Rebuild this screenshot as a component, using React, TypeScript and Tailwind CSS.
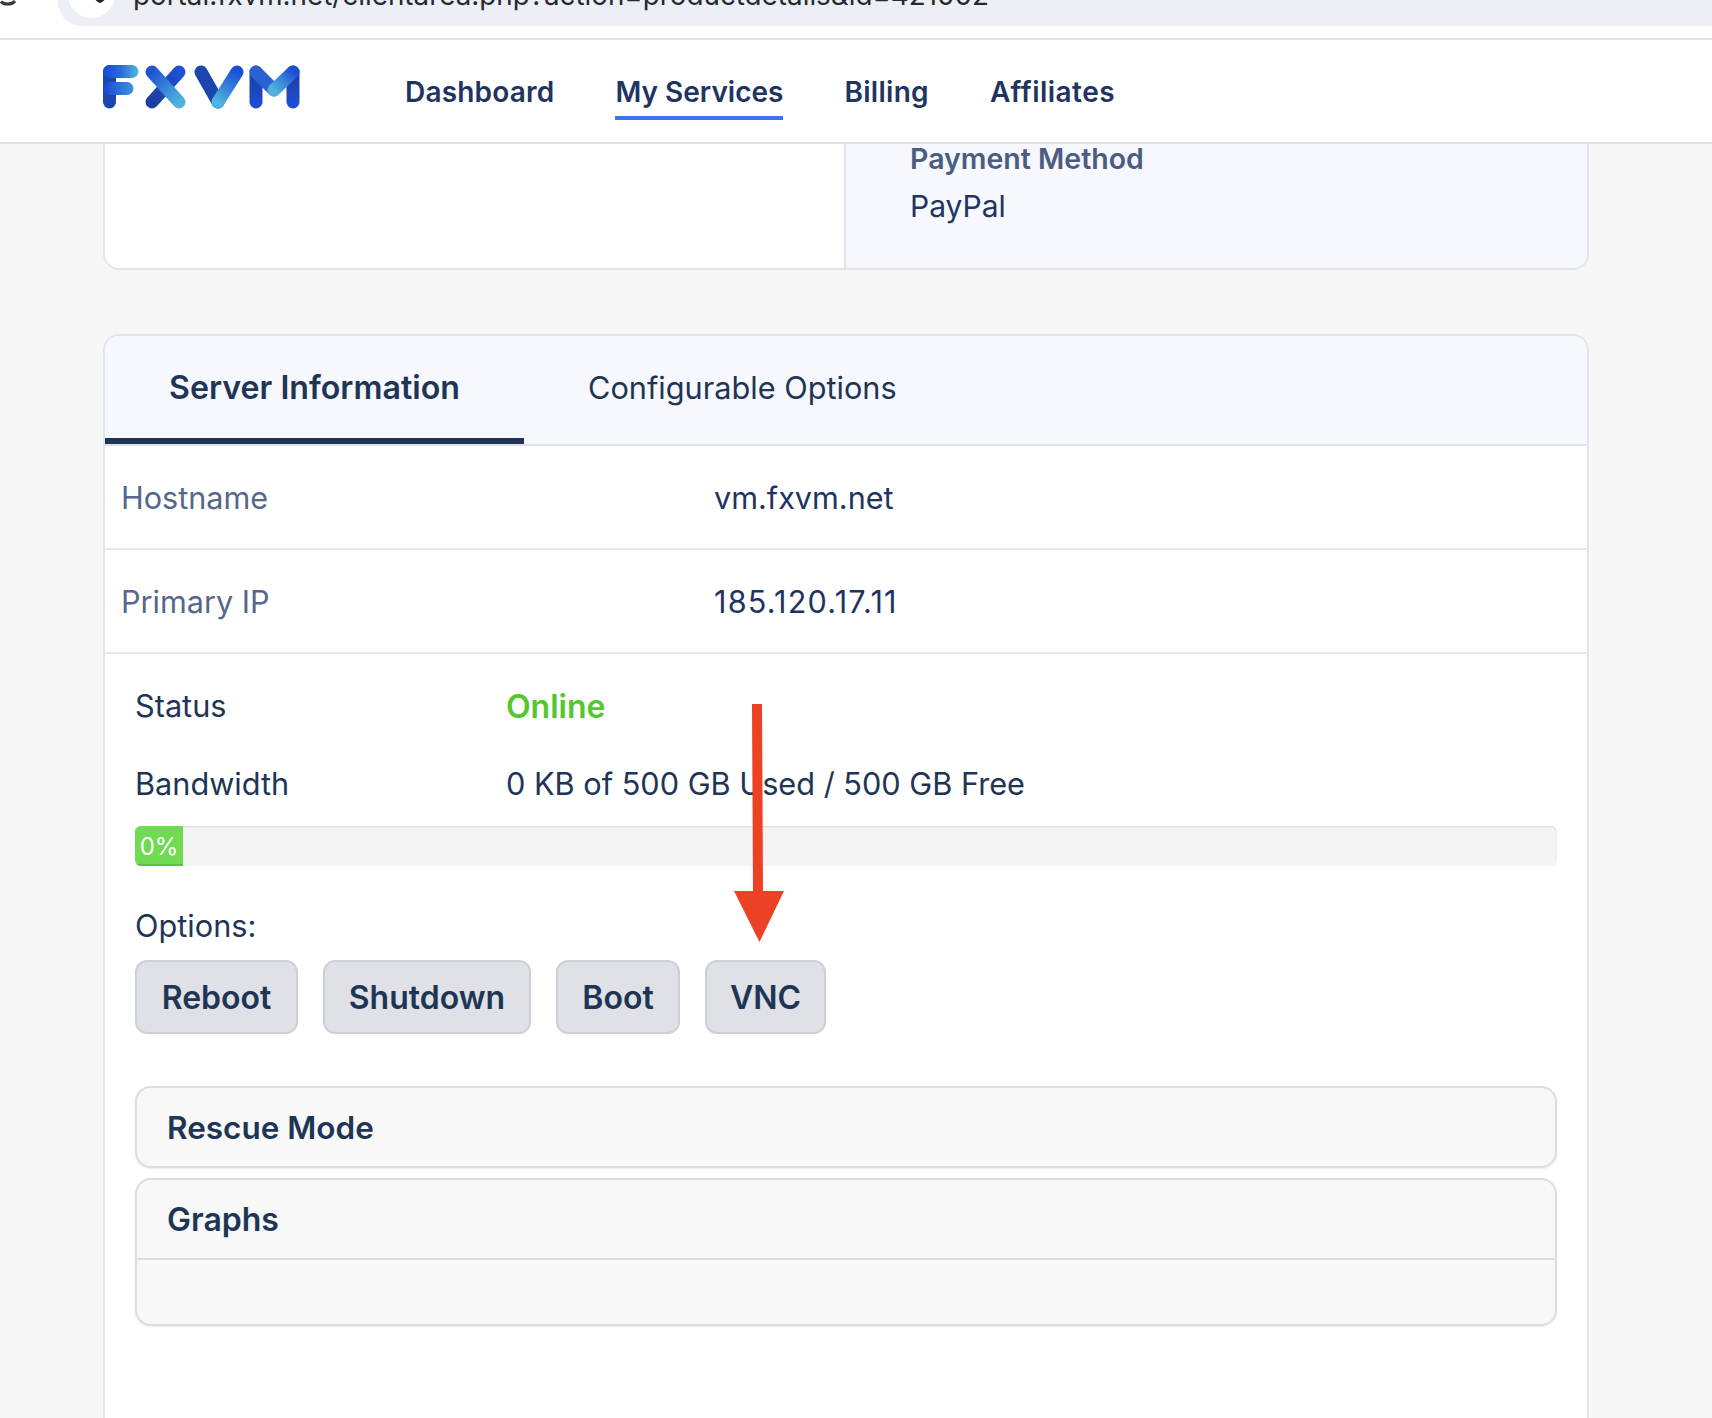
const Logo = () => (
  <svg width="198" height="44" viewBox="0 0 198 44" className="block">
    <defs>
      <linearGradient id="a" gradientUnits="userSpaceOnUse" x1="4" y1="6" x2="34" y2="6"><stop offset="0" stopColor="#1d4ed8" /><stop offset="0.45" stopColor="#2b6ad6" /><stop offset="1" stopColor="#4fb3dc" /></linearGradient>
      <linearGradient id="a2" gradientUnits="userSpaceOnUse" x1="4" y1="23" x2="30" y2="23"><stop offset="0" stopColor="#1d4ed8" /><stop offset="1" stopColor="#3d93de" /></linearGradient>
      <linearGradient id="b" gradientUnits="userSpaceOnUse" x1="48" y1="8" x2="78" y2="36"><stop offset="0" stopColor="#1f54d6" /><stop offset="1" stopColor="#4fb3dc" /></linearGradient>
      <linearGradient id="c" gradientUnits="userSpaceOnUse" x1="48" y1="37" x2="78" y2="7"><stop offset="0" stopColor="#1c3f9e" /><stop offset="1" stopColor="#1d4fd8" /></linearGradient>
      <linearGradient id="d" gradientUnits="userSpaceOnUse" x1="115" y1="37" x2="134" y2="7"><stop offset="0" stopColor="#4fb3dc" /><stop offset="1" stopColor="#1d4ed8" /></linearGradient>
      <linearGradient id="e" gradientUnits="userSpaceOnUse" x1="171" y1="25" x2="190" y2="6"><stop offset="0" stopColor="#4fb3dc" /><stop offset="1" stopColor="#1d4ed8" /></linearGradient>
      <linearGradient id="f" gradientUnits="userSpaceOnUse" x1="153" y1="38" x2="153" y2="6"><stop offset="0" stopColor="#1d4cd0" /><stop offset="1" stopColor="#1c3f9e" /></linearGradient>
    </defs>
    <g fill="none" strokeLinecap="round" strokeWidth="13">
      <path d="M6.5 6.5V37" stroke="#1c45ad" />
      <path d="M6.5 23.5H24" stroke="url(#a2)" />
      <path d="M6.5 6.5H29" stroke="url(#a)" />
      <path d="M49 37L76 7" stroke="url(#c)" />
      <path d="M49 7L76 37" stroke="url(#b)" />
      <path d="M98 7L115 37" stroke="#1c45ad" />
      <path d="M115 37L134 7" stroke="url(#d)" />
      <path d="M153 37V7" stroke="url(#f)" />
      <path d="M190 37V7" stroke="url(#f)" />
      <path d="M153 7L171 25" stroke="#2a62d4" />
      <path d="M171 25L190 7" stroke="url(#e)" />
    </g>
  </svg>
);

const Btn = ({ label, w }: { label: string; w: string }) => (
  <button className={`h-[74px] ${w} rounded-[12px] border-2 border-[#cdd0d7] bg-[#dfe1e7] pt-[2px] text-[32px] font-semibold text-[#1f3555]`}>{label}</button>
);

const NavItem = ({ label, active, track }: { label: string; active?: boolean; track?: string }) => (
  <div className={`flex h-[50px] items-center border-b-4 pb-[2px] ${active ? "border-[#3b76ef]" : "border-transparent"}`}>
    <span className={`text-[28px] font-semibold text-[#1f3461] ${track ?? ""}`}>{label}</span>
  </div>
);

export default function App() {
  return (
    <div className="relative h-[1418px] overflow-hidden bg-[#f7f7f7] font-['Inter',sans-serif]">
      <div className="flex h-[38px] bg-white">
        <svg width="58" height="26" viewBox="0 0 58 26" className="shrink-0">
          <path d="M1 1.5C4 5 12 5 15 1" fill="none" stroke="#3a3a3c" strokeWidth="3" />
        </svg>
        <div className="flex h-[26px] flex-1 items-end overflow-hidden rounded-bl-[24px] bg-[#edeff6] pl-[10px]">
          <div className="mb-[8px] flex h-[47px] w-[47px] shrink-0 items-end rounded-full bg-white pb-[15px] pl-[27px]">
            <svg width="10" height="4" viewBox="0 0 10 4" className="block">
              <path d="M0 0H10C9 2 7 3.4 5 4C3 3.4 1 2 0 0Z" fill="#222" />
            </svg>
          </div>
          <span className="mb-[14px] ml-[18px] whitespace-nowrap text-[27.8px] leading-[34px] text-[#26292e]">portal.fxvm.net/clientarea.php?action=productdetails&amp;id=421002</span>
        </div>
      </div>
      <div className="flex h-[106px] items-start border-y-2 border-t-[#e3e3e6] border-b-[#dfe2e8] bg-white pl-[103px]">
        <div className="mt-[25px] w-[302px]"><Logo /></div>
        <div className="mt-[30px] flex gap-[61px]">
          <NavItem label="Dashboard" track="tracking-[0.2px]" />
          <NavItem label="My Services" active />
          <NavItem label="Billing" track="tracking-[0.3px]" />
          <NavItem label="Affiliates" track="tracking-[0.45px]" />
        </div>
      </div>
      <div className="ml-[103px] w-[1486px]">
        <div className="flex h-[126px] overflow-hidden rounded-b-[16px] border-2 border-t-0 border-[#e1e4ea] bg-white">
          <div className="w-[741px] border-r-2 border-[#e1e4ea]" />
          <div className="flex-1 bg-[#f6f8fd] pl-[64px]">
            <div className="text-[28.5px] font-semibold leading-[30px] text-[#4a5d80]">Payment Method</div>
            <div className="mt-[14px] text-[30px] leading-[36px] text-[#1f3461]">PayPal</div>
          </div>
        </div>
        <div className="mt-[64px] h-[1100px] rounded-t-[16px] border-2 border-[#e1e4ea] bg-white">
          <div className="flex h-[110px] overflow-hidden rounded-t-[14px] border-b-2 border-[#dfe2e8] bg-[#f6f8fd]">
            <div className="flex h-[108px] w-[419px] items-center justify-center border-b-[6px] border-[#1f3555] pt-[2px]">
              <span className="text-[32.2px] font-semibold text-[#1f3555]">Server Information</span>
            </div>
            <div className="ml-[64px] flex h-[108px] items-center pb-[4px]">
              <span className="text-[30.7px] text-[#1f3555]">Configurable Options</span>
            </div>
          </div>
          <div className="flex h-[104px] items-center border-b-2 border-[#e5e6eb] pt-[2px]">
            <span className="w-[609px] pl-[16px] text-[30.6px] text-[#55678a]">Hostname</span>
            <span className="text-[30.6px] text-[#1f3461]">vm.fxvm.net</span>
          </div>
          <div className="flex h-[104px] items-center border-b-2 border-[#e5e6eb] pt-[2px]">
            <span className="w-[609px] pl-[16px] text-[30.6px] text-[#55678a]">Primary IP</span>
            <span className="text-[30.6px] tracking-[1.2px] text-[#1f3461]">185.120.17.11</span>
          </div>
          <div className="px-[30px] pt-[30px]">
            <div className="flex h-[44px] items-center text-[30.7px] text-[#1f3555]">
              <span className="w-[371px]">Status</span>
              <span className="pt-[1px] text-[32px] font-semibold text-[#52c72e]">Online</span>
            </div>
            <div className="mt-[34px] flex h-[44px] items-center text-[30.7px] text-[#1f3555]">
              <span className="w-[371px]">Bandwidth</span>
              <span>0 KB of 500 GB Used / 500 GB Free</span>
            </div>
            <div className="mt-[20px] h-[40px] w-[1422px] overflow-hidden rounded-[6px] bg-[#f4f4f4] shadow-[inset_0_1px_2px_rgba(0,0,0,0.1)]">
              <div className="flex h-full w-[48px] items-center justify-center border-b-2 border-[#5cc043] bg-[#6edb52] pt-[3px] text-[24px] text-white">0%</div>
            </div>
            <div className="mt-[38px] flex h-[44px] items-center text-[30.7px] text-[#1f3555]">Options:</div>
            <div className="mt-[12px] flex gap-[25px]">
              <Btn label="Reboot" w="w-[163px]" />
              <Btn label="Shutdown" w="w-[208px]" />
              <Btn label="Boot" w="w-[124px]" />
              <Btn label="VNC" w="w-[121px]" />
            </div>
            <div className="mt-[52px] flex h-[82px] w-[1422px] items-center rounded-[16px] border-2 border-[#dcdde3] bg-[#f8f8f9] pl-[30px] pt-[2px] shadow-[0_1px_2px_rgba(0,0,0,0.08)]">
              <span className="text-[31.5px] font-semibold text-[#1f3555]">Rescue Mode</span>
            </div>
            <div className="mt-[10px] h-[148px] w-[1422px] rounded-[16px] border-2 border-[#dcdde3] bg-[#f8f8f9] shadow-[0_1px_2px_rgba(0,0,0,0.08)]">
              <div className="flex h-[80px] items-center border-b-2 border-[#dcdde3] pl-[30px] pt-[2px]">
                <span className="text-[32px] font-semibold text-[#1f3555]">Graphs</span>
              </div>
            </div>
          </div>
        </div>
      </div>
      <svg width="52" height="240" viewBox="0 0 52 240" className="absolute left-[733px] top-[703px]">
        <path d="M19 1H29L30 188H51L26.5 239L1 188H20Z" fill="#ec4125" />
      </svg>
    </div>
  );
}
